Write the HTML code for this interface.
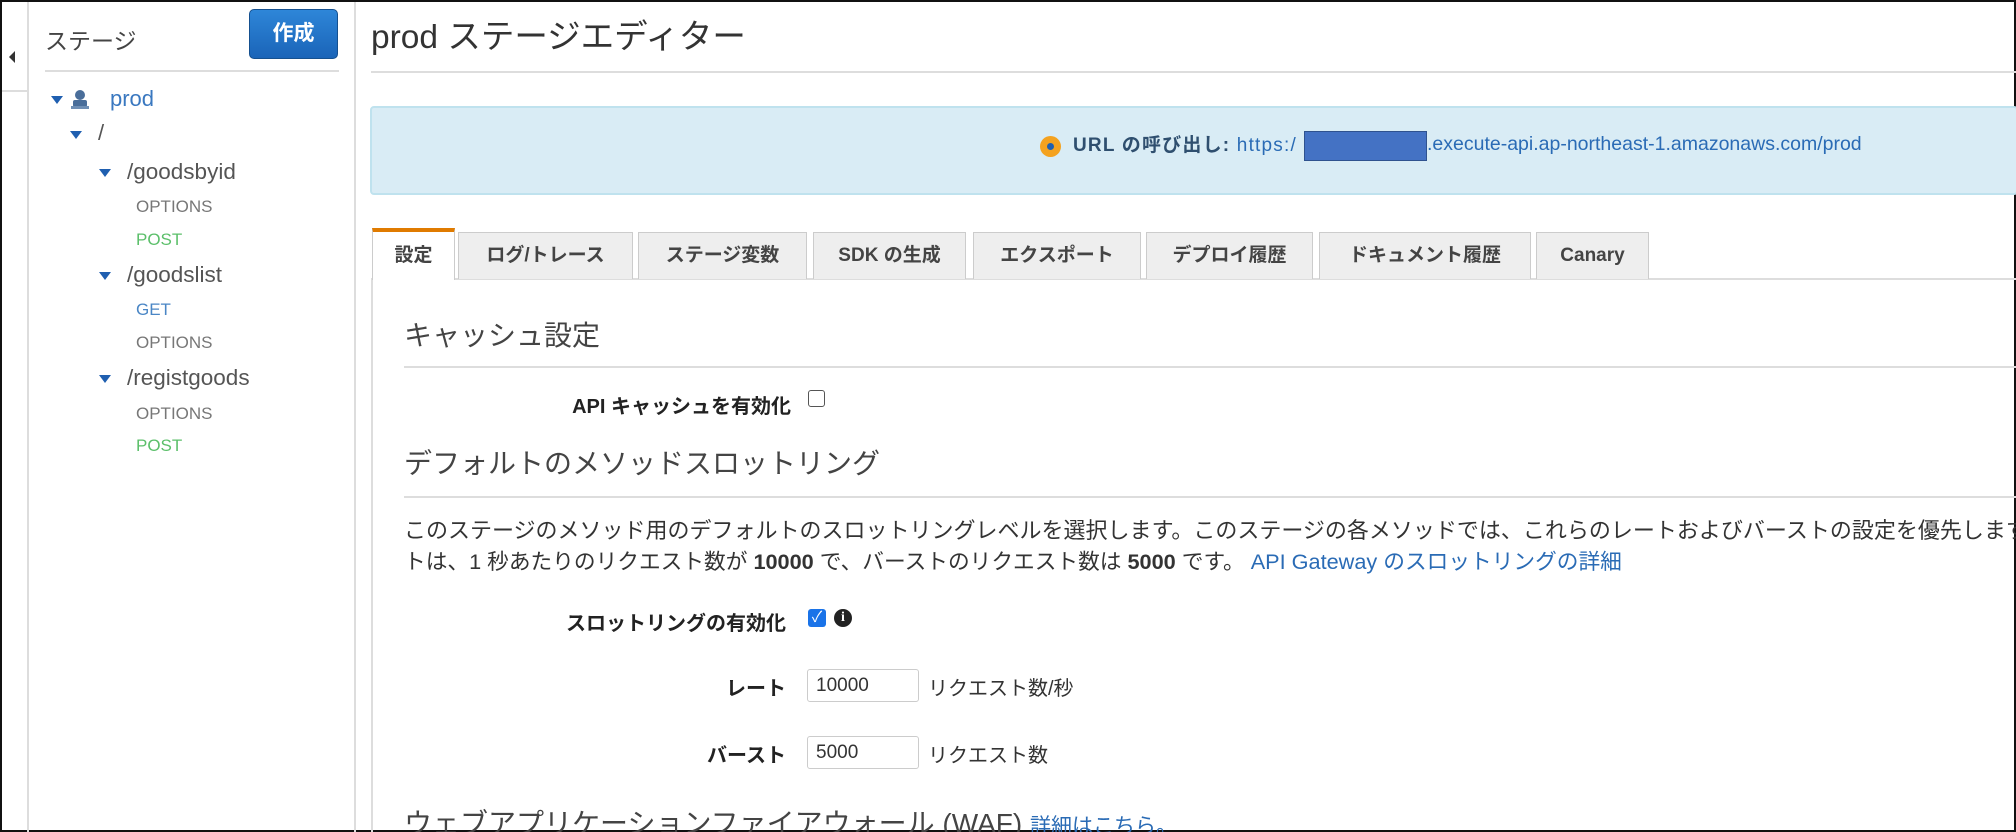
<!DOCTYPE html>
<html><head><meta charset="utf-8">
<style>
*{box-sizing:border-box;margin:0;padding:0}
html,body{width:2016px;height:832px;overflow:hidden;background:#fff}
body{position:relative;font-family:"Liberation Sans","Noto Sans CJK JP",sans-serif;color:#333;border:2px solid #111}
.a{position:absolute;white-space:nowrap}
.tri{position:absolute;width:0;height:0;border-left:6px solid transparent;border-right:6px solid transparent;border-top:8px solid #1f5fb0}
.m{font-size:17px;color:#777}
.post{color:#5bbf6a}
.get{color:#4a86c5}
.tab{position:absolute;top:230px;height:47px;background:#eee;border:1px solid #ccc;border-bottom:none;font-weight:bold;font-size:19px;color:#444;text-align:center;line-height:46px}
.lbl{position:absolute;font-weight:bold;font-size:20px;color:#222;text-align:right;white-space:nowrap}
.inp{position:absolute;left:805px;width:112px;height:33px;border:1px solid #ccc;border-radius:3px;font-size:19px;padding-left:8px;line-height:31px;color:#333}
.h{position:absolute;left:402px;font-size:28px;color:#444;white-space:nowrap}
</style></head><body>
<div class="a" style="left:0;top:0;width:27px;height:90px;border-right:2px solid #ddd;border-bottom:2px solid #ddd"></div>
<div class="a" style="left:25px;top:88px;width:2px;height:744px;background:#ddd"></div>
<div class="a" style="left:7px;top:49px;width:0;height:0;border-top:6px solid transparent;border-bottom:6px solid transparent;border-right:6px solid #333"></div>
<div class="a" style="left:43px;top:20px;font-size:23px;color:#444">ステージ</div>
<div class="a" style="left:247px;top:7px;width:89px;height:50px;background:linear-gradient(#2e86d8,#1a64b8);border:1px solid #15508f;border-radius:5px;color:#fff;font-weight:bold;font-size:21px;text-align:center;line-height:48px">作成</div>
<div class="a" style="left:43px;top:68px;width:294px;height:2px;background:#ddd"></div>
<div class="a" style="left:352px;top:0;width:2px;height:832px;background:#ddd"></div>
<div class="tri" style="left:49px;top:94px"></div>
<svg class="a" style="left:68px;top:86px" width="20" height="22" viewBox="0 0 20 22"><circle cx="10" cy="7" r="5" fill="#4a6e9a"/><rect x="3" y="12" width="14" height="7" rx="2" fill="#4a6e9a"/><rect x="1" y="18" width="18" height="3" fill="#6f8fb5"/></svg>
<div class="a" style="left:108px;top:84px;font-size:22px;color:#3a78c0">prod</div>
<div class="tri" style="left:68px;top:129px"></div>
<div class="a" style="left:96px;top:118px;font-size:22px;color:#555">/</div>
<div class="tri" style="left:97px;top:167px"></div>
<div class="a" style="left:125px;top:157px;font-size:22.5px;color:#555">/goodsbyid</div>
<div class="a m" style="left:134px;top:195px">OPTIONS</div>
<div class="a m post" style="left:134px;top:228px">POST</div>
<div class="tri" style="left:97px;top:270px"></div>
<div class="a" style="left:125px;top:260px;font-size:22.5px;color:#555">/goodslist</div>
<div class="a m get" style="left:134px;top:298px">GET</div>
<div class="a m" style="left:134px;top:331px">OPTIONS</div>
<div class="tri" style="left:97px;top:373px"></div>
<div class="a" style="left:125px;top:363px;font-size:22.5px;color:#555">/registgoods</div>
<div class="a m" style="left:134px;top:402px">OPTIONS</div>
<div class="a m post" style="left:134px;top:434px">POST</div>
<div class="a" style="left:369px;top:7px;font-size:33.5px;color:#333">prod ステージエディター</div>
<div class="a" style="left:369px;top:69px;width:1647px;height:2px;background:#ddd"></div>
<div class="a" style="left:368px;top:104px;width:1648px;height:89px;background:#d9ecf5;border:2px solid #bfe2ee;border-radius:4px"></div>
<div class="a" style="left:1038px;top:134px;width:21px;height:21px;border-radius:50%;background:#f4a21f"></div>
<div class="a" style="left:1045px;top:141px;width:7px;height:7px;border-radius:50%;background:#1f5fb0"></div>
<div class="a" style="left:1071px;top:128px;font-size:19px;color:#2f4f6f;letter-spacing:1.2px"><b>URL の呼び出し:</b> <span style="color:#2a6bb5">https:/</span></div>
<div class="a" style="left:1302px;top:129px;width:123px;height:30px;background:#4472c4;border:1px solid #2f528f"></div>
<div class="a" style="left:1425px;top:131px;font-size:19.5px;color:#2a6bb5">.execute-api.ap-northeast-1.amazonaws.com/prod</div>
<div class="a" style="left:369px;top:276px;width:1647px;height:2px;background:#ddd"></div>
<div class="tab" style="left:370px;width:83px;top:226px;height:52px;background:#fff;border-top:4px solid #e07b00;line-height:48px">設定</div>
<div class="tab" style="left:456px;width:175px">ログ/トレース</div>
<div class="tab" style="left:636px;width:169px">ステージ変数</div>
<div class="tab" style="left:811px;width:153px">SDK の生成</div>
<div class="tab" style="left:971px;width:168px">エクスポート</div>
<div class="tab" style="left:1144px;width:167px">デプロイ履歴</div>
<div class="tab" style="left:1317px;width:212px">ドキュメント履歴</div>
<div class="tab" style="left:1534px;width:113px">Canary</div>
<div class="a" style="left:369px;top:278px;width:2px;height:554px;background:#ddd"></div>
<div class="h" style="top:312px">キャッシュ設定</div>
<div class="a" style="left:402px;top:364px;width:1614px;height:2px;background:#ddd"></div>
<div class="lbl" style="right:1223px;top:388px">API キャッシュを有効化</div>
<div class="a" style="left:806px;top:388px;width:17px;height:17px;border:1.5px solid #555;border-radius:3px"></div>
<div class="h" style="top:440px">デフォルトのメソッドスロットリング</div>
<div class="a" style="left:402px;top:494px;width:1614px;height:2px;background:#ddd"></div>
<div class="a" style="left:402px;top:511px;font-size:22px;color:#333">このステージのメソッド用のデフォルトのスロットリングレベルを選択します。このステージの各メソッドでは、これらのレートおよびバーストの設定を優先します。</div>
<div class="a" style="left:402px;top:543px;font-size:21.7px;color:#333">トは、1 秒あたりのリクエスト数が <b>10000</b> で、バーストのリクエスト数は <b>5000</b> です。 <span style="color:#2a6bb5">API Gateway のスロットリングの詳細</span></div>
<div class="lbl" style="right:1228px;top:605px">スロットリングの有効化</div>
<div class="a" style="left:806px;top:607px;width:18px;height:18px;background:#1a73e8;border-radius:3px;color:#fff;font-size:15px;line-height:18px;text-align:center">✓</div>
<div class="a" style="left:832px;top:607px;width:18px;height:18px;border-radius:50%;background:#222;color:#fff;font:bold 14px 'Liberation Serif',serif;text-align:center;line-height:18px">i</div>
<div class="lbl" style="right:1228px;top:670px">レート</div>
<div class="inp" style="top:667px">10000</div>
<div class="a" style="left:926px;top:670px;font-size:20px;color:#333">リクエスト数/秒</div>
<div class="lbl" style="right:1228px;top:737px">バースト</div>
<div class="inp" style="top:734px">5000</div>
<div class="a" style="left:926px;top:737px;font-size:20px;color:#333">リクエスト数</div>
<div class="h" style="top:800px">ウェブアプリケーションファイアウォール (WAF) <span style="font-size:21px;color:#2a6bb5">詳細はこちら。</span></div>
</body></html>
